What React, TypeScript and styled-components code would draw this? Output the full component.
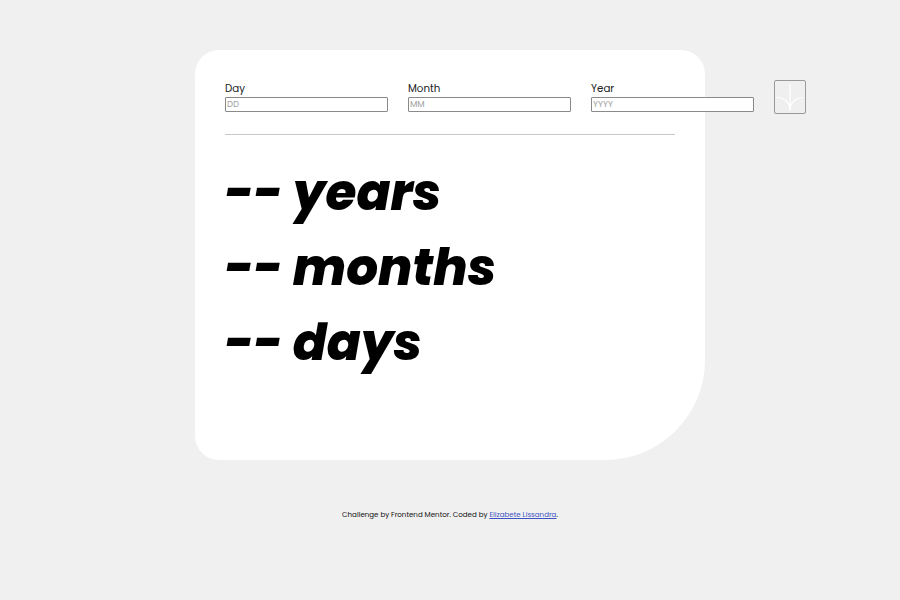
import React from "react";
import styled, { createGlobalStyle } from "styled-components";

const Global = createGlobalStyle`
  html, body { margin: 0; padding: 0; background: #f0f0f0; }
  body { font-family: "Poppins", "Inter", "Noto Sans", sans-serif; }
`;

const Page = styled.div`
  display: flex;
  flex-direction: column;
  align-items: center;
  padding-top: 50px;
`;

const Card = styled.main`
  box-sizing: border-box;
  width: 510px;
  height: 410px;
  background: #ffffff;
  border-radius: 24px 24px 100px 24px;
  padding: 31px 30px 0;
`;

const Form = styled.form`
  display: flex;
  align-items: flex-start;
  gap: 20px;
  width: 600px;
`;

const Field = styled.label`
  display: flex;
  flex-direction: column;
  width: 163px;
  font-size: 10.3px;
  color: #222;
  line-height: 15px;
  gap: 1px;
`;

const Input = styled.input`
  box-sizing: border-box;
  width: 163px;
  height: 15px;
  margin: 0;
  padding: 0 1px;
  border: 1px solid #8a8a8a;
  border-radius: 1px;
  font-family: "Poppins", "Inter", sans-serif;
  font-size: 8.5px;
  &::placeholder { color: #a0a0a0; }
`;

const Submit = styled.button`
  box-sizing: border-box;
  width: 32px;
  height: 34px;
  margin-top: -1px;
  padding: 0;
  display: flex;
  align-items: center;
  justify-content: center;
  background: #efefef;
  border: 1px solid #9a9a9a;
  border-radius: 2px;
`;

const Divider = styled.hr`
  margin: 20px 0 0;
  border: none;
  border-top: 1px solid #c8c8c8;
  width: 450px;
`;

const Results = styled.section`
  margin-top: 20px;
`;

const Line = styled.p`
  margin: 0;
  font-size: 50px;
  line-height: 75px;
  font-weight: 800;
  font-style: italic;
  color: #000;
`;

const Footer = styled.footer`
  margin-top: 50px;
  font-size: 7.1px;
  color: #111;
  text-align: center;
  a { color: #3e52c3; }
`;

const Arrow = () => (
  <svg width="28" height="27" viewBox="0 0 46 44">
    <g fill="none" stroke="#fff" strokeWidth="2">
      <path d="M1 22.019C8.333 21.686 23 25.616 23 44M23 44V0M45 22.019C37.667 21.686 23 25.616 23 44" />
    </g>
  </svg>
);

export default function App() {
  return (
    <>
      <Global />
      <Page>
        <Card>
          <Form onSubmit={(e) => e.preventDefault()}>
            <Field>
              Day
              <Input placeholder="DD" />
            </Field>
            <Field>
              Month
              <Input placeholder="MM" />
            </Field>
            <Field>
              Year
              <Input placeholder="YYYY" />
            </Field>
            <Submit type="submit" aria-label="Submit">
              <Arrow />
            </Submit>
          </Form>
          <Divider />
          <Results>
            <Line>-- years</Line>
            <Line>-- months</Line>
            <Line>-- days</Line>
          </Results>
        </Card>
        <Footer>
          Challenge by Frontend Mentor. Coded by <a href="#">Elizabete Lissandra</a>.
        </Footer>
      </Page>
    </>
  );
}
